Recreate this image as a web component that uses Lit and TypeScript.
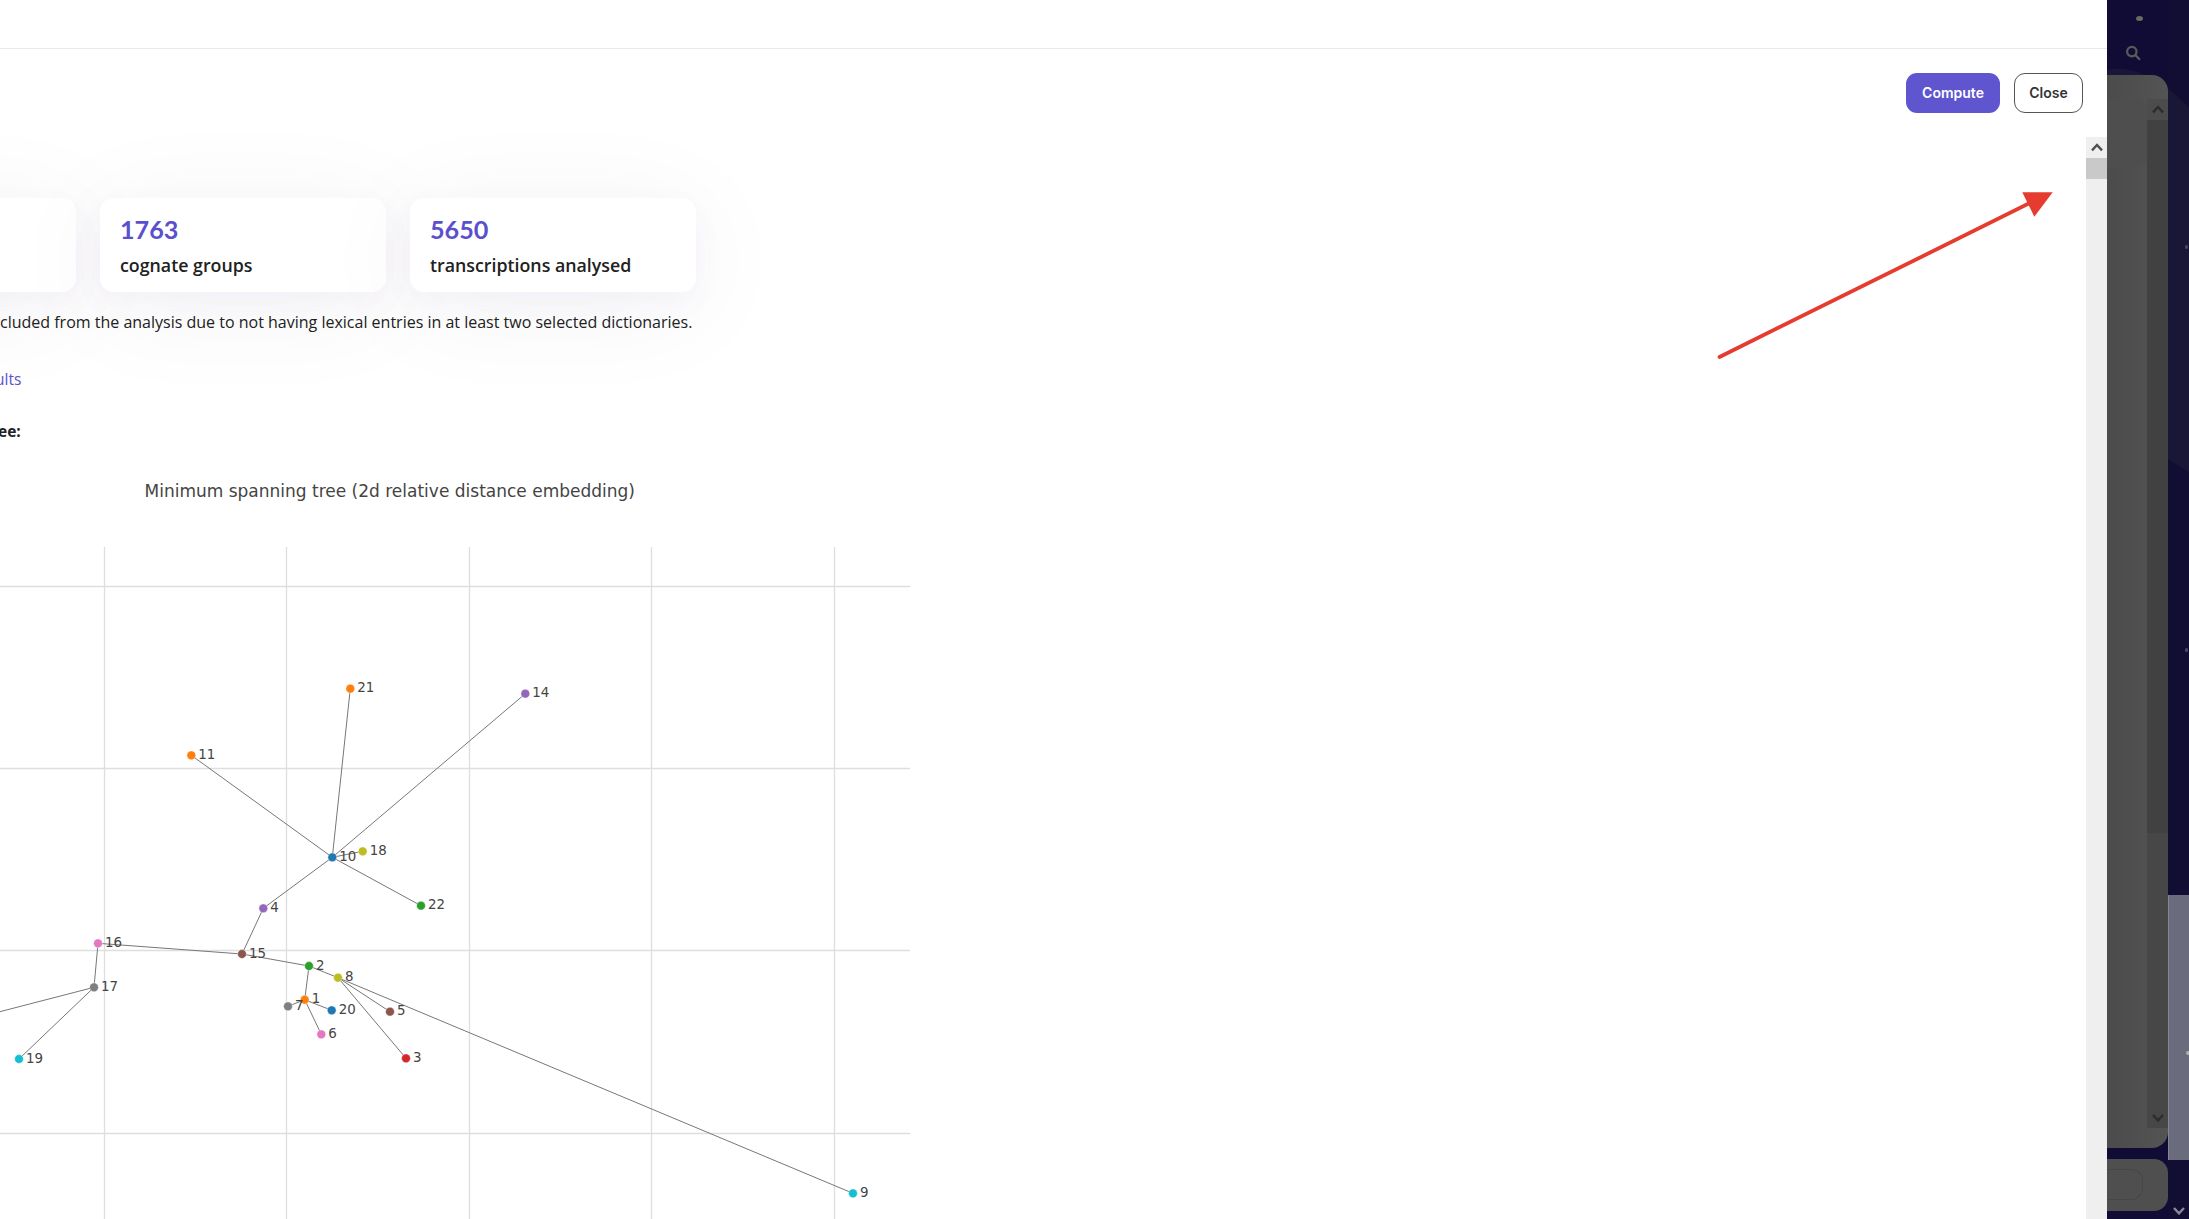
import { LitElement, html, css, svg } from "lit";
import { customElement } from "lit/decorators.js";

const C = ["#1f77b4", "#ff7f0e", "#2ca02c", "#d62728", "#9467bd", "#8c564b", "#e377c2", "#7f7f7f", "#bcbd22", "#17becf"];

type Node = { id: number; x: number; y: number };
const nodes: Node[] = [
  { id: 1, x: 304.7, y: 999.7 }, { id: 2, x: 309, y: 966 }, { id: 3, x: 406, y: 1058.3 },
  { id: 4, x: 263.3, y: 908.3 }, { id: 5, x: 390, y: 1011.7 }, { id: 6, x: 321.3, y: 1034.3 },
  { id: 7, x: 288, y: 1006.3 }, { id: 8, x: 338, y: 977.7 }, { id: 9, x: 853, y: 1193.3 },
  { id: 10, x: 332.3, y: 857.3 }, { id: 11, x: 191.3, y: 755.3 }, { id: 14, x: 525.3, y: 693.7 },
  { id: 15, x: 242, y: 954 }, { id: 16, x: 98, y: 943.3 }, { id: 17, x: 94, y: 987.3 },
  { id: 18, x: 362.7, y: 851.3 }, { id: 19, x: 19, y: 1059 }, { id: 20, x: 331.7, y: 1010.3 },
  { id: 21, x: 350.3, y: 688.7 }, { id: 22, x: 421, y: 905.7 },
];
const edges: [number, number][] = [
  [10, 21], [10, 14], [10, 11], [10, 18], [10, 22], [10, 4], [4, 15], [15, 16], [15, 2], [16, 17],
  [17, 19], [2, 8], [2, 1], [1, 7], [1, 20], [1, 6], [8, 5], [8, 3], [8, 9],
];
const byId = new Map(nodes.map((n) => [n.id, n]));
const vGrid = [104.5, 286.5, 469.5, 651.5, 834.5];
const hGrid = [586.5, 768.5, 950.5, 1133.5];

@customElement("app-root")
export class AppRoot extends LitElement {
  static styles = css`
    :host { display: flex; width: 2189px; height: 1219px; overflow: hidden; position: relative; background: #fff; font-family: "Open Sans", "Lato", sans-serif; }
    .modal { width: 2107px; flex: none; display: flex; flex-direction: column; background: #fff; position: relative; }
    .topbar { height: 48px; flex: none; border-bottom: 1px solid #e9e9e9; box-sizing: content-box; }
    .body { flex: 1; display: flex; min-height: 0; }
    .content { flex: 1; min-width: 0; display: flex; flex-direction: column; position: relative; overflow: hidden; }
    .actions { display: flex; justify-content: flex-end; gap: 14px; padding: 24px 3px 0 0; height: 64px; box-sizing: border-box; flex: none; }
    button { font-family: "Inter", "Liberation Sans", sans-serif; font-size: 14px; font-weight: 600; height: 40px; border-radius: 11px; box-sizing: border-box; padding: 0 0 2px; }
    .primary { width: 94px; background: #5e55cf; color: #fff; border: none; }
    .ghost { width: 69px; background: #fff; color: #333; border: 1.4px solid #555; }
    .stats { display: flex; gap: 24px; margin: 85px 0 0 -210px; flex: none; }
    .card { width: 286px; height: 94px; box-sizing: border-box; padding: 15px 20px; background: #fff; border-radius: 14px; box-shadow: 0 14px 110px rgba(60, 50, 110, 0.06), 0 10px 30px rgba(60, 50, 110, 0.045); }
    .num { font-family: "Lato", sans-serif; font-size: 25.2px; font-weight: 700; color: #5a50cd; line-height: 32px; }
    .lab { font-size: 17.8px; font-weight: 600; color: #212121; line-height: 24px; margin-top: 8px; white-space: nowrap; }
    .para { font-size: 16px; color: #212121; line-height: 22px; margin-top: 19px; white-space: nowrap; position: relative; }
    .link { font-size: 15.5px; color: #5a50cd; line-height: 22px; margin: 35px 0 0 -5px; position: relative; }
    .tree { font-size: 15.5px; font-weight: 700; color: #212121; line-height: 22px; margin: 30px 0 0 -2px; position: relative; }
    .chart { position: absolute; left: 0; top: -49px; width: 1000px; height: 1219px; pointer-events: none; }
    .title { font: 17px "DejaVu Sans", sans-serif; fill: #444; }
    .lbl { font: 13.4px "DejaVu Sans", sans-serif; fill: #444; }
    .arrow { position: absolute; left: 0; top: 0; width: 2107px; height: 1219px; pointer-events: none; }
    .sb { width: 21px; flex: none; background: #efefef; display: flex; flex-direction: column; align-self: stretch; margin-top: 88px; }
    .sb .up { height: 21px; display: flex; align-items: center; justify-content: center; }
    .sb .thumb { height: 21px; background: #c9c9c9; }
    .side { flex: 1; position: relative; background: #100c35; display: flex; overflow: hidden; }
    .blob { position: absolute; left: 0; top: 0; width: 82px; height: 1219px; }
    .sidecol { width: 61px; flex: none; display: flex; flex-direction: column; position: relative; }
    .dot { width: 7px; height: 5px; border-radius: 50%; background: #6a6a60; margin: 16px 0 0 28.5px; flex: none; }
    .search { margin: 24px 0 0 18px; width: 16.5px; height: 16px; display: block; flex: none; }
    .panel { margin-top: 14px; height: 1073px; flex: none; background: linear-gradient(90deg, #4b4b4b, #545454); border-radius: 0 16px 16px 0; display: flex; padding-top: 24px; padding-bottom: 20px; box-sizing: border-box; position: relative; }
    .panel .inner { flex: 1; }
    .panel .inner div { height: 68px; background: #4e4e4e; border-radius: 0 10px 10px 0; }
    .psb { width: 21px; background: #414141; display: flex; flex-direction: column; }
    .psb .cap { height: 21px; flex: none; display: flex; align-items: center; justify-content: center; background: #4c4c4c; }
    .psb .track { height: 713px; flex: none; }
    .psb .pthumb { flex: 1; background: #474747; }
    .psb .cap.low { background: #474747; height: 20px; }
    .foot { margin-top: 11px; height: 52px; flex: none; background: #4f4f4f; border-radius: 0 14px 14px 0; padding: 10px 25px 11px 0; box-sizing: border-box; }
    .foot div { height: 100%; border: 1.4px solid #474747; border-left: none; border-radius: 0 12px 12px 0; box-sizing: border-box; }
    .rail { flex: 1; position: relative; display: flex; flex-direction: column; background: rgba(26, 22, 40, 0.12); }
    .rail .space { height: 895px; flex: none; }
    .rail .bar { height: 265px; flex: none; background: #6b6b7e; position: relative; border-left: 1px solid #85858f; box-sizing: border-box; }
    .rail .bar i { position: absolute; right: 0; top: 156px; width: 3px; height: 4px; border-radius: 2px 0 0 2px; background: #b0b0b0; }
    .rail .down { flex: 1; display: flex; align-items: flex-end; justify-content: center; padding-bottom: 4px; }
    .spec { position: absolute; right: 1px; width: 3px; height: 4px; border-radius: 2px; background: #4a4858; }
    .s1 { top: 245px; }
    .s2 { top: 648px; }
  `;

  private chevron(up: boolean, color: string, w = 12) {
    return html`<svg width=${w} height=${w * 0.7} viewBox="0 0 12 8.4" fill="none" stroke=${color} stroke-width="2.4">
      <path d=${up ? "M1 7.4 L6 2 L11 7.4" : "M1 1 L6 6.4 L11 1"}></path>
    </svg>`;
  }

  private chart() {
    return html`<svg class="chart" viewBox="0 0 1000 1219">
      ${vGrid.map((x) => svg`<line x1=${x} x2=${x} y1="547" y2="1219" stroke="#dedede" stroke-width="1.3"></line>`)}
      ${hGrid.map((y) => svg`<line x1="0" x2="910" y1=${y} y2=${y} stroke="#dedede" stroke-width="1.3"></line>`)}
      <text class="title" x="144.5" y="497">Minimum spanning tree (2d relative distance embedding)</text>
      ${edges.map(([a, b]) => {
        const p = byId.get(a)!, q = byId.get(b)!;
        return svg`<line x1=${p.x} y1=${p.y} x2=${q.x} y2=${q.y} stroke="#777" stroke-width="1"></line>`;
      })}
      <line x1="94" y1="987.3" x2="-94" y2="1036" stroke="#777" stroke-width="1"></line>
      ${nodes.map((n) => svg`<circle cx=${n.x} cy=${n.y} r="4.4" fill=${C[n.id % 10]} stroke="#fff" stroke-width="0.4"></circle>`)}
      ${nodes.map((n) => svg`<text class="lbl" x=${n.x + 7} y=${n.y + 3.6}>${n.id}</text>`)}
    </svg>`;
  }

  render() {
    return html`
      <div class="modal">
        <div class="topbar"></div>
        <div class="body">
          <div class="content">
            ${this.chart()}
            <div class="actions">
              <button class="primary">Compute</button>
              <button class="ghost">Close</button>
            </div>
            <div class="stats">
              <div class="card"></div>
              <div class="card"><div class="num">1763</div><div class="lab">cognate groups</div></div>
              <div class="card"><div class="num">5650</div><div class="lab">transcriptions analysed</div></div>
            </div>
            <div class="para">cluded from the analysis due to not having lexical entries in at least two selected dictionaries.</div>
            <div class="link">ults</div>
            <div class="tree">ee:</div>
          </div>
          <div class="sb">
            <div class="up">${this.chevron(true, "#505050")}</div>
            <div class="thumb"></div>
          </div>
        </div>
        <svg class="arrow" viewBox="0 0 2107 1219">
          <line x1="1719.5" y1="357" x2="2036" y2="200" stroke="#e53c2f" stroke-width="3.8" stroke-linecap="round"></line>
          <polygon points="2022.3,192.3 2052.7,192.3 2034.3,216.7" fill="#e53c2f"></polygon>
        </svg>
      </div>
      <div class="side">
        <svg class="blob" viewBox="0 0 82 1219">
          <path d="M0 70 C 25 64, 55 80, 82 107 L82 472 L62 460 C 40 450, 20 440, 0 430 Z" fill="#1a1638"></path>
        </svg>
        <div class="sidecol">
          <div class="dot"></div>
          <svg class="search" viewBox="0 0 17 17" fill="none" stroke="#5a5a5a" stroke-width="2.4">
            <circle cx="7" cy="7" r="5"></circle><path d="M10.8 10.8 L15.6 15.6"></path>
          </svg>
          <div class="panel">
            <div class="inner"><div></div></div>
            <div class="psb">
              <div class="cap">${this.chevron(true, "#2c2c2c")}</div>
              <div class="track"></div>
              <div class="pthumb"></div>
              <div class="cap low">${this.chevron(false, "#2c2c2c")}</div>
            </div>
          </div>
          <div class="foot"><div></div></div>
        </div>
        <div class="rail">
          <div class="space"></div>
          <div class="bar"><i></i></div>
          <div class="down">${this.chevron(false, "#8a8896")}</div>
          <div class="spec s1"></div>
          <div class="spec s2"></div>
        </div>
      </div>
    `;
  }
}
